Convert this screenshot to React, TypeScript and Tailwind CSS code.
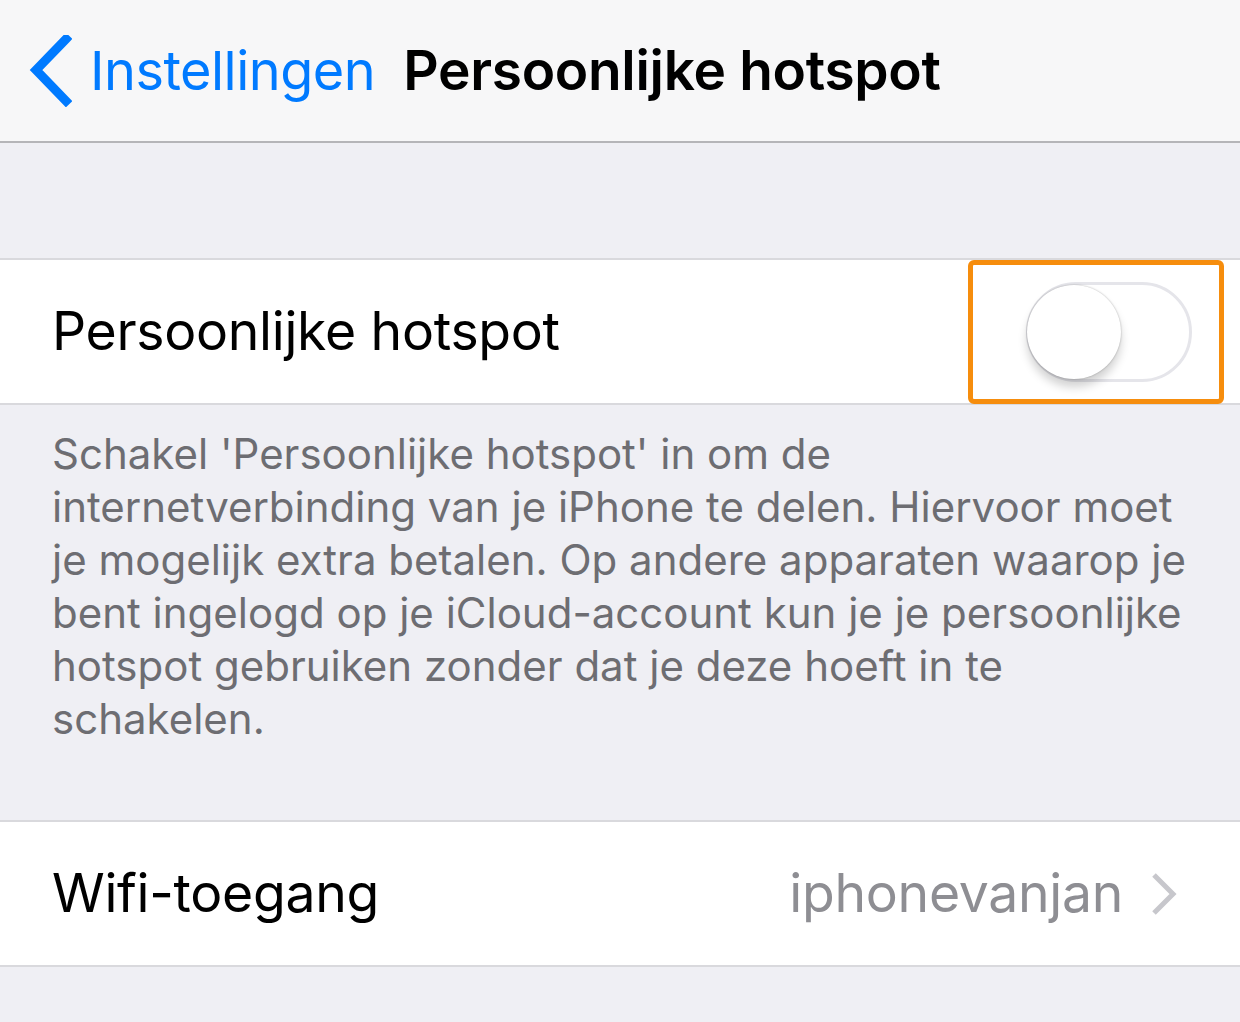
import React from 'react';

const font = { fontFamily: 'Inter, Roboto, "Noto Sans", sans-serif' };

const footerLines = [
  "Schakel 'Persoonlijke hotspot' in om de",
  'internetverbinding van je iPhone te delen. Hiervoor moet',
  'je mogelijk extra betalen. Op andere apparaten waarop je',
  'bent ingelogd op je iCloud-account kun je je persoonlijke',
  'hotspot gebruiken zonder dat je deze hoeft in te',
  'schakelen.',
];

const BackChevron: React.FC = () => (
  <svg width="44" height="72" viewBox="0 0 44 72" className="shrink-0">
    <path d="M38 4 L8 35 L38 66" fill="none" stroke="#007aff" strokeWidth="9" strokeLinecap="square" strokeLinejoin="miter" />
  </svg>
);

const Toggle: React.FC = () => (
  <div className="w-[256px] h-[144px] border-[5px] border-[#f68d0d] rounded-[6px] flex items-center justify-end pr-[27px] bg-white">
    <div className="relative w-[166px] h-[100px] rounded-full border-[3px] border-[#e5e5ea] bg-white">
      <div className="absolute left-[-2px] top-[0px] w-[94px] h-[94px] rounded-full bg-white shadow-[0_8px_10px_rgba(0,0,0,0.18),0_0_2px_rgba(0,0,0,0.3)]" />
    </div>
  </div>
);

const App: React.FC = () => {
  return (
    <div className="w-[1240px] h-[1022px] bg-[#efeff4] overflow-hidden" style={font}>
      {/* Nav bar */}
      <header className="h-[143px] bg-[#f7f7f8] border-b-[2px] border-[#b5b5b8] flex items-center pl-[28px]">
        <BackChevron />
        <span className="ml-[18px] text-[54px] text-[#007aff] tracking-[-0.5px]">Instellingen</span>
        <span className="ml-[28px] text-[55px] font-semibold text-black tracking-[-0.3px]">Persoonlijke hotspot</span>
      </header>

      <div className="h-[115px]" />

      {/* Hotspot row */}
      <div className="bg-white border-y-[2px] border-[#d9d9dd] h-[147px] flex items-center justify-between pl-[52px] pr-[16px]">
        <span className="text-[53.5px] text-black tracking-[-0.3px]">Persoonlijke hotspot</span>
        <Toggle />
      </div>

      {/* Footer text */}
      <div className="pl-[52px] pr-[40px] pt-[22px] text-[42px] leading-[53px] text-[#6d6d72] h-[415px]">
        {footerLines.map(line => (
          <p key={line} className="whitespace-nowrap">{line}</p>
        ))}
      </div>

      {/* Wifi row */}
      <div className="bg-white border-y-[2px] border-[#d9d9dd] h-[147px] flex items-center pl-[52px] pr-[63px]">
        <span className="text-[53.5px] text-black tracking-[-0.3px]">Wifi-toegang</span>
        <span className="ml-auto text-[53.5px] text-[#8e8e93] tracking-[-0.3px]">iphonevanjan</span>
        <svg width="26" height="44" viewBox="0 0 26 44" className="ml-[28px]">
          <path d="M3 3 L22 22 L3 41" fill="none" stroke="#c7c7cc" strokeWidth="5" />
        </svg>
      </div>
    </div>
  );
};

export default App;
